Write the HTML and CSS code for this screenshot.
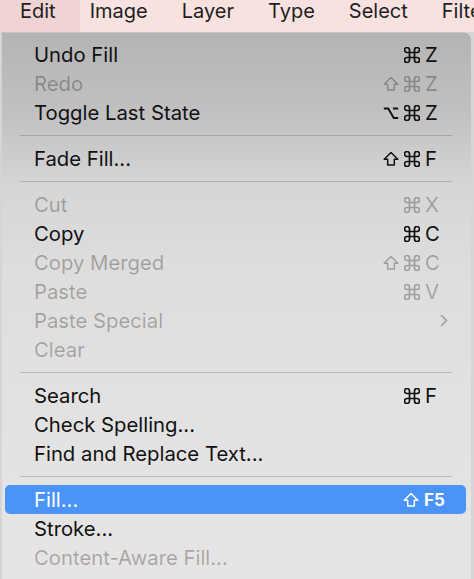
FILE: index.html
```html
<!DOCTYPE html>
<html lang="en">
<head>
<meta charset="utf-8">
<title>Edit menu</title>
<link rel="stylesheet" href="styles.css">
</head>
<body>
<svg class="defs" width="0" height="0" aria-hidden="true">
  <defs>
    <symbol id="cmd" viewBox="0 0 16 16"><path d="M5.5 5.5 V3 A2.5 2.5 0 1 0 3 5.5 H13 A2.5 2.5 0 1 0 10.5 3 V13 A2.5 2.5 0 1 0 13 10.5 H3 A2.5 2.5 0 1 0 5.5 13 Z" fill="none" stroke="currentColor" stroke-width="1.7"/></symbol>
    <symbol id="shift" viewBox="0 0 16 16"><path d="M8 1.5 L14.8 8.3 H11.3 V14 H4.7 V8.3 H1.2 Z" fill="none" stroke="currentColor" stroke-width="1.5" stroke-linejoin="round"/></symbol>
    <symbol id="opt" viewBox="0 0 16 16"><path d="M0.8 3.5 H5.2 L10.8 13 H15.2 M10 3.5 H15.2" fill="none" stroke="currentColor" stroke-width="1.9"/></symbol>
  </defs>
</svg>
<div class="menubar">
  <span class="mb-item active">Edit</span>
  <span class="mb-item">Image</span>
  <span class="mb-item">Layer</span>
  <span class="mb-item">Type</span>
  <span class="mb-item">Select</span>
  <span class="mb-item">Filter</span>
</div>
<div class="menu">
  <div class="row"><span class="label">Undo Fill</span><span class="mods"><svg class="ic"><use href="#cmd"/></svg></span><span class="key">Z</span></div>
  <div class="row disabled"><span class="label">Redo</span><span class="mods"><svg class="ic"><use href="#shift"/></svg><svg class="ic"><use href="#cmd"/></svg></span><span class="key">Z</span></div>
  <div class="row"><span class="label">Toggle Last State</span><span class="mods"><svg class="ic"><use href="#opt"/></svg><svg class="ic"><use href="#cmd"/></svg></span><span class="key">Z</span></div>
  <div class="sep"></div>
  <div class="row"><span class="label">Fade Fill...</span><span class="mods"><svg class="ic"><use href="#shift"/></svg><svg class="ic"><use href="#cmd"/></svg></span><span class="key">F</span></div>
  <div class="sep"></div>
  <div class="row disabled"><span class="label">Cut</span><span class="mods"><svg class="ic"><use href="#cmd"/></svg></span><span class="key">X</span></div>
  <div class="row"><span class="label">Copy</span><span class="mods"><svg class="ic"><use href="#cmd"/></svg></span><span class="key">C</span></div>
  <div class="row disabled"><span class="label">Copy Merged</span><span class="mods"><svg class="ic"><use href="#shift"/></svg><svg class="ic"><use href="#cmd"/></svg></span><span class="key">C</span></div>
  <div class="row disabled"><span class="label">Paste</span><span class="mods"><svg class="ic"><use href="#cmd"/></svg></span><span class="key">V</span></div>
  <div class="row disabled"><span class="label">Paste Special</span><span class="mods"></span><span class="key"><svg class="chev" width="8" height="13" viewBox="0 0 8 13"><path d="M1.5 1.5 L6.5 6.5 L1.5 11.5" fill="none" stroke="currentColor" stroke-width="1.6" stroke-linecap="round" stroke-linejoin="round"/></svg></span></div>
  <div class="row disabled"><span class="label">Clear</span><span class="mods"></span><span class="key"></span></div>
  <div class="sep"></div>
  <div class="row"><span class="label">Search</span><span class="mods"><svg class="ic"><use href="#cmd"/></svg></span><span class="key">F</span></div>
  <div class="row"><span class="label">Check Spelling...</span><span class="mods"></span><span class="key"></span></div>
  <div class="row"><span class="label">Find and Replace Text...</span><span class="mods"></span><span class="key"></span></div>
  <div class="sep"></div>
  <div class="row selected"><span class="label">Fill...</span><span class="mods"><svg class="ic bold"><use href="#shift"/></svg></span><span class="key fkey">F5</span></div>
  <div class="row"><span class="label">Stroke...</span><span class="mods"></span><span class="key"></span></div>
  <div class="row disabled"><span class="label">Content-Aware Fill...</span><span class="mods"></span><span class="key"></span></div>
</div>
</body>
</html>
```

FILE: styles.css
```css
html, body {
  margin: 0;
  padding: 0;
}
body {
  width: 474px;
  height: 579px;
  overflow: hidden;
  background: #d6d4d4;
  font-family: "Inter", "Noto Sans", "DejaVu Sans", sans-serif;
  -webkit-font-smoothing: antialiased;
}
.defs {
  position: absolute;
  width: 0;
  height: 0;
}

.menubar {
  display: flex;
  height: 32px;
  background: #f8e2e0;
  white-space: nowrap;
  overflow: hidden;
}
.mb-item {
  font-size: 20px;
  line-height: 22px;
  padding: 0 17px;
  color: #1e1e1e;
}
.mb-item.active {
  padding: 0 24px 0 20px;
  margin-right: -7px;
  background: #efd4d3;
}

.menu {
  margin-left: 2px;
  width: 469px;
  height: 547px;
  box-sizing: border-box;
  padding-top: 7px;
  border-top-right-radius: 9px;
  border-top: 1px solid rgba(0, 0, 0, 0.14);
  background: linear-gradient(to bottom, #b4b4b4 0%, #c2c2c2 16%, #d6d6d6 28%, #dedede 45%, #e3e2e2 70%, #e6e4e4 100%);
}

.row {
  display: flex;
  align-items: center;
  height: 29px;
  padding: 0 16px 0 32px;
  font-size: 20.3px;
  color: #111;
}
.row.disabled {
  color: rgba(0, 0, 0, 0.28);
}
.row.selected {
  margin: 0 5px 0 3px;
  padding: 0 12px 0 29px;
  border-radius: 5px;
  background: #4a93f7;
  color: #fff;
}
.label {
  flex: 1;
  white-space: nowrap;
}
.mods {
  display: flex;
  align-items: center;
  gap: 5px;
  padding-right: 5px;
}
.ic {
  width: 16px;
  height: 16px;
}
.ic.bold {
  stroke-width: 2;
}
.key {
  width: 30px;
  text-align: left;
  display: flex;
  align-items: center;
}
.key.fkey {
  font-weight: 700;
  font-size: 17px;
}
.chev {
  margin-left: 15px;
}

.sep {
  height: 1px;
  margin: 8px 19px 8px 18px;
  background: rgba(0, 0, 0, 0.17);
}
```
